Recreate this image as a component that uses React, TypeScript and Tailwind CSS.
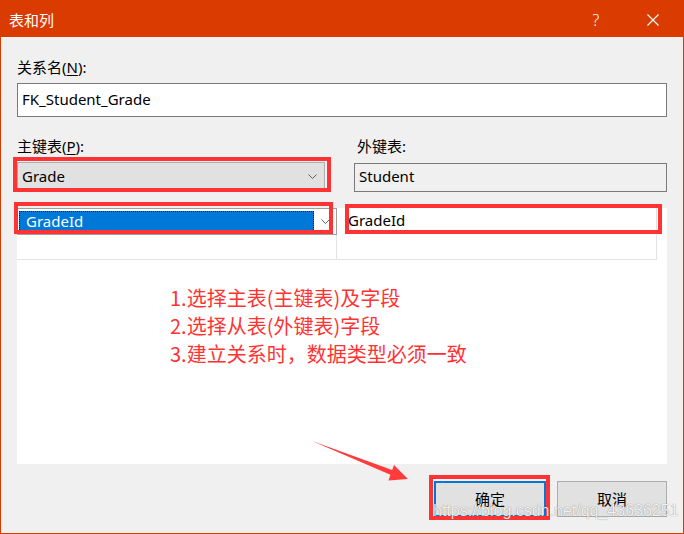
import React from "react";

const Chevron = () => (
  <svg width="9" height="5" viewBox="0 0 9 5" className="shrink-0">
    <polyline points="0.5,0.5 4.5,4.5 8.5,0.5" fill="none" stroke="#606060" strokeWidth="1" />
  </svg>
);

export default function App() {
  return (
    <div className="relative w-[684px] h-[534px] flex flex-col bg-[#f0f0f0] border-x border-b border-[#d83b01] text-[15px] text-black [font-family:'Noto_Sans','Noto_Sans_CJK_SC',sans-serif] overflow-hidden">
      {/* Title bar */}
      <div className="h-[37px] shrink-0 bg-[#da3b01] flex items-center text-white -mx-px">
        <div className="pl-[9px] pt-[3px] leading-[20px]">表和列</div>
        <div className="flex-1" />
        <div className="w-[20px] text-center pt-[2px] mr-[41px] text-[16px] font-light">?</div>
        <svg width="12" height="12" viewBox="0 0 12 12" className="mr-[25px] mt-[2px]">
          <path d="M0.5 0.5 L11.5 11.5 M11.5 0.5 L0.5 11.5" stroke="#fff" strokeWidth="1.1" />
        </svg>
      </div>

      {/* Body */}
      <div className="flex-1 flex flex-col px-4 pt-[20px] pb-[16px]">
        <div className="h-[20px] leading-[20px]">
          关系名(<span className="underline underline-offset-2">N</span>):
        </div>
        <div className="mt-[6px] h-[34px] bg-white border border-[#7a7a7a] flex items-start pt-[4px] pl-[4px] leading-[22px]">
          FK_Student_Grade
        </div>

        <div className="mt-[19px] h-[20px] leading-[20px] flex">
          <div className="w-[337px]">
            主键表(<span className="underline underline-offset-2">P</span>):
          </div>
          <div className="pl-[3px]">外键表:</div>
        </div>

        <div className="mt-[6px] flex items-start">
          <div className="w-[308px] h-[28px] bg-[#e1e1e1] border border-[#adadad] flex items-center pl-[4px] pr-[7px]">
            <span className="flex-1">Grade</span>
            <Chevron />
          </div>
          <div className="ml-[29px] mt-px w-[313px] h-[29px] bg-[#f0f0f0] border border-[#7a7a7a] flex items-center pl-[4px] pb-[2px]">
            Student
          </div>
        </div>

        {/* Grid panel */}
        <div className="mt-[16px] flex-1 bg-white flex flex-col">
          <div className="w-[640px] flex flex-col">
            <div className="flex h-[27px]">
              <div className="w-[320px] h-[27px] border border-[#a0a0a0] flex items-center pt-[1px] pb-[1px] pl-px pr-[6px]">
                <div className="w-[295px] h-[21px] bg-[#0078d7] border border-dotted border-[#1a1a1a] text-white flex items-center pl-[6px]">
                  GradeId
                </div>
                <div className="flex-1" />
                <Chevron />
              </div>
              <div className="flex-1 flex items-center pl-[11px] pb-[2px] border-r border-[#e3e3e3]">GradeId</div>
            </div>
            <div className="flex h-[25px] border-b border-[#e3e3e3]">
              <div className="w-[320px] border-r border-[#e3e3e3]" />
              <div className="flex-1 border-r border-[#e3e3e3]" />
            </div>
          </div>

          <div className="mt-[24px] ml-[153px] text-[20px] leading-[28px] text-[#ff3333] [font-family:'Noto_Sans_CJK_SC','Noto_Sans',sans-serif]">
            <div>1.选择主表(主键表)及字段</div>
            <div>2.选择从表(外键表)字段</div>
            <div>3.建立关系时，数据类型必须一致</div>
          </div>
        </div>

        {/* Buttons */}
        <div className="mt-[17px] flex justify-end gap-[11px]">
          <div className="w-[112px] h-[36px] bg-[#e1e1e1] border-2 border-[#0078d7] flex items-center justify-center">确定</div>
          <div className="w-[110px] h-[36px] bg-[#e1e1e1] border border-[#adadad] flex items-center justify-center">取消</div>
        </div>
      </div>

      {/* Annotations */}
      <div className="absolute left-[12px] top-[157px] w-[318px] h-[35px] border-4 border-[#ff3333] pointer-events-none" />
      <div className="absolute left-[13px] top-[202px] w-[319px] h-[32px] border-4 border-[#ff3333] pointer-events-none" />
      <div className="absolute left-[344px] top-[204px] w-[317px] h-[30px] border-4 border-[#ff3333] pointer-events-none" />
      <div className="absolute left-[428px] top-[475px] w-[121px] h-[45px] border-4 border-[#ff3333] pointer-events-none" />
      <svg className="absolute left-[-1px] top-0 pointer-events-none" width="684" height="534" viewBox="0 0 684 534">
        <polygon points="312,441 392.2,470 394,465 408,479 388.5,480.5 390.4,474.7" fill="#ff3b3b" />
      </svg>
      <div className="absolute left-[432px] top-[501px] text-[16px] leading-[20px] text-white/90 [font-family:'Liberation_Sans',sans-serif] [text-shadow:0_0_1px_rgba(0,0,0,0.55)] pointer-events-none whitespace-nowrap">
        https://blog.csdn.net/qq_43636251
      </div>
    </div>
  );
}
